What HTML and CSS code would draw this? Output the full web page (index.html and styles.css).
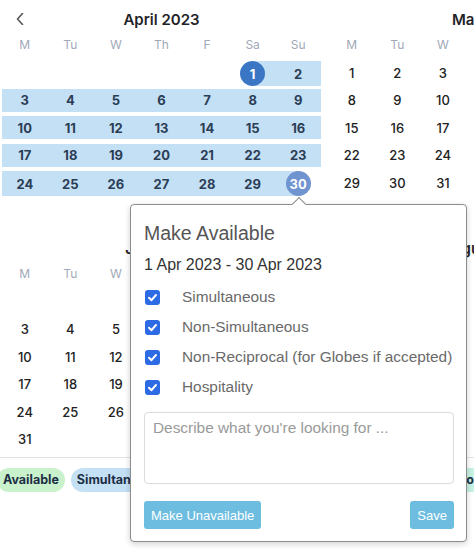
FILE: index.html
```html
<!DOCTYPE html>
<html>
<head>
<meta charset="utf-8">
<link rel="stylesheet" href="styles.css">
</head>
<body>
<div class="page">
  <div class="months">
    <section class="month">
      <div class="month-head">
        <svg class="prev" viewBox="0 0 12 12"><path d="M8.5 0.5 L3.5 6 L8.5 11.5" fill="none" stroke="#555" stroke-width="1.6" stroke-linecap="round" stroke-linejoin="round"/></svg>
        April 2023
      </div>
      <div class="weekdays"><span>M</span><span>Tu</span><span>W</span><span>Th</span><span>F</span><span>Sa</span><span>Su</span></div>
      <div class="week"><span class="d"></span><span class="d"></span><span class="d"></span><span class="d"></span><span class="d"></span><span class="d in start"><span class="circle c1">1</span></span><span class="d in">2</span></div>
      <div class="week"><span class="d in">3</span><span class="d in">4</span><span class="d in">5</span><span class="d in">6</span><span class="d in">7</span><span class="d in">8</span><span class="d in">9</span></div>
      <div class="week"><span class="d in">10</span><span class="d in">11</span><span class="d in">12</span><span class="d in">13</span><span class="d in">14</span><span class="d in">15</span><span class="d in">16</span></div>
      <div class="week"><span class="d in">17</span><span class="d in">18</span><span class="d in">19</span><span class="d in">20</span><span class="d in">21</span><span class="d in">22</span><span class="d in">23</span></div>
      <div class="week"><span class="d in">24</span><span class="d in">25</span><span class="d in">26</span><span class="d in">27</span><span class="d in">28</span><span class="d in">29</span><span class="d in end"><span class="circle c30">30</span></span></div>
    </section>
    <section class="month">
      <div class="month-head">May 2023</div>
      <div class="weekdays"><span>M</span><span>Tu</span><span>W</span><span>Th</span><span>F</span><span>Sa</span><span>Su</span></div>
      <div class="week"><span class="d">1</span><span class="d">2</span><span class="d">3</span><span class="d">4</span><span class="d">5</span><span class="d">6</span><span class="d">7</span></div>
      <div class="week"><span class="d">8</span><span class="d">9</span><span class="d">10</span><span class="d">11</span><span class="d">12</span><span class="d">13</span><span class="d">14</span></div>
      <div class="week"><span class="d">15</span><span class="d">16</span><span class="d">17</span><span class="d">18</span><span class="d">19</span><span class="d">20</span><span class="d">21</span></div>
      <div class="week"><span class="d">22</span><span class="d">23</span><span class="d">24</span><span class="d">25</span><span class="d">26</span><span class="d">27</span><span class="d">28</span></div>
      <div class="week"><span class="d">29</span><span class="d">30</span><span class="d">31</span><span class="d"></span><span class="d"></span><span class="d"></span><span class="d"></span></div>
    </section>
    <section class="month">
      <div class="month-head">July 2023</div>
      <div class="weekdays"><span>M</span><span>Tu</span><span>W</span><span>Th</span><span>F</span><span>Sa</span><span>Su</span></div>
      <div class="week"><span class="d"></span><span class="d"></span><span class="d"></span><span class="d"></span><span class="d"></span><span class="d">1</span><span class="d">2</span></div>
      <div class="week"><span class="d">3</span><span class="d">4</span><span class="d">5</span><span class="d">6</span><span class="d">7</span><span class="d">8</span><span class="d">9</span></div>
      <div class="week"><span class="d">10</span><span class="d">11</span><span class="d">12</span><span class="d">13</span><span class="d">14</span><span class="d">15</span><span class="d">16</span></div>
      <div class="week"><span class="d">17</span><span class="d">18</span><span class="d">19</span><span class="d">20</span><span class="d">21</span><span class="d">22</span><span class="d">23</span></div>
      <div class="week"><span class="d">24</span><span class="d">25</span><span class="d">26</span><span class="d">27</span><span class="d">28</span><span class="d">29</span><span class="d">30</span></div>
      <div class="week"><span class="d">31</span><span class="d"></span><span class="d"></span><span class="d"></span><span class="d"></span><span class="d"></span><span class="d"></span></div>
    </section>
    <section class="month">
      <div class="month-head">August 2023</div>
      <div class="weekdays"><span>M</span><span>Tu</span><span>W</span><span>Th</span><span>F</span><span>Sa</span><span>Su</span></div>
      <div class="week"><span class="d"></span><span class="d">1</span><span class="d">2</span><span class="d">3</span><span class="d">4</span><span class="d">5</span><span class="d">6</span></div>
      <div class="week"><span class="d">7</span><span class="d">8</span><span class="d">9</span><span class="d">10</span><span class="d">11</span><span class="d">12</span><span class="d">13</span></div>
      <div class="week"><span class="d">14</span><span class="d">15</span><span class="d">16</span><span class="d">17</span><span class="d">18</span><span class="d">19</span><span class="d">20</span></div>
      <div class="week"><span class="d">21</span><span class="d">22</span><span class="d">23</span><span class="d">24</span><span class="d">25</span><span class="d">26</span><span class="d">27</span></div>
      <div class="week"><span class="d">28</span><span class="d">29</span><span class="d">30</span><span class="d">31</span><span class="d"></span><span class="d"></span><span class="d"></span></div>
    </section>
  </div>
  <div class="rule"></div>
  <div class="legend">
    <span class="pill green">Available</span>
    <span class="pill blue">Simultaneous</span>
    <span class="pill purple">Non-Simultaneous</span>
    <span class="pill amber">Non-Reciprocal</span>
    <span class="pill teal">Hospitality</span>
  </div>

  <div class="popover">
    <span class="arrow"></span>
    <div class="pop-title">Make Available</div>
    <div class="pop-date">1 Apr 2023 - 30 Apr 2023</div>
    <div class="opts">
      <label class="opt"><span class="cb"><svg viewBox="0 0 15 15" width="15" height="15"><path d="M4 7.8 L6.5 10.2 L11 5" fill="none" stroke="#fff" stroke-width="2" stroke-linecap="round" stroke-linejoin="round"/></svg></span>Simultaneous</label>
      <label class="opt"><span class="cb"><svg viewBox="0 0 15 15" width="15" height="15"><path d="M4 7.8 L6.5 10.2 L11 5" fill="none" stroke="#fff" stroke-width="2" stroke-linecap="round" stroke-linejoin="round"/></svg></span>Non-Simultaneous</label>
      <label class="opt"><span class="cb"><svg viewBox="0 0 15 15" width="15" height="15"><path d="M4 7.8 L6.5 10.2 L11 5" fill="none" stroke="#fff" stroke-width="2" stroke-linecap="round" stroke-linejoin="round"/></svg></span>Non-Reciprocal (for Globes if accepted)</label>
      <label class="opt"><span class="cb"><svg viewBox="0 0 15 15" width="15" height="15"><path d="M4 7.8 L6.5 10.2 L11 5" fill="none" stroke="#fff" stroke-width="2" stroke-linecap="round" stroke-linejoin="round"/></svg></span>Hospitality</label>
    </div>
    <textarea class="desc" placeholder="Describe what you're looking for ..."></textarea>
    <div class="actions">
      <button class="btn">Make Unavailable</button>
      <button class="btn">Save</button>
    </div>
  </div>
</div>
</body>
</html>
```
FILE: styles.css
```css
* { box-sizing: border-box; }
body {
  margin: 0;
  font-family: Inter, "Liberation Sans", sans-serif;
  background: #fff;
  overflow: hidden;
}
.page {
  position: relative;
  width: 474px;
  height: 549px;
  overflow: hidden;
}
.months {
  display: grid;
  grid-template-columns: 319px 319px;
  column-gap: 8px;
  row-gap: 7px;
  padding-left: 2px;
  width: 700px;
}
.month { height: 222px; }
.month-head {
  position: relative;
  height: 38px;
  display: flex;
  align-items: center;
  justify-content: center;
  font-size: 15px;
  font-weight: 600;
  color: #1f2328;
  white-space: nowrap;
}
.prev {
  position: absolute;
  left: 12px;
  top: 13px;
  width: 12px;
  height: 12px;
}
.weekdays {
  display: grid;
  grid-template-columns: repeat(7, 1fr);
  height: 14px;
  line-height: 14px;
  font-size: 12px;
  color: #a1a9b8;
  text-align: center;
  margin-bottom: 9px;
}
.week {
  display: grid;
  grid-template-columns: repeat(7, 1fr);
  height: 23px;
  margin-bottom: 4.5px;
}
.d {
  display: flex;
  align-items: center;
  justify-content: center;
  font-size: 13px;
  font-weight: 500;
  color: #222;
}
.in {
  background: #c4e0f5;
  font-weight: 700;
  color: #2b3d55;
}
.in.start { background: linear-gradient(to right, transparent 50%, #c4e0f5 50%); }
.in.end { background: linear-gradient(to right, #c4e0f5 50%, transparent 50%); }
.circle {
  width: 25px;
  height: 25px;
  border-radius: 50%;
  color: #fff;
  display: flex;
  align-items: center;
  justify-content: center;
}
.c1 { background: #3a76c4; }
.c30 { background: #6f94cf; }

.rule {
  height: 1px;
  background: #e2e2e2;
  margin-top: 6px;
}
.legend {
  display: flex;
  gap: 6px;
  margin-top: 10px;
  margin-left: -3px;
  white-space: nowrap;
}
.pill {
  height: 24px;
  line-height: 24px;
  padding: 0 6px;
  border-radius: 12px;
  font-size: 12.5px;
  font-weight: 700;
  color: #1d2f45;
}
.green { background: #c9f2cc; }
.blue { background: #c4e0f5; }
.purple { background: #e3d6f5; }
.amber { background: #f7e3bd; }
.teal { background: #c6f1e3; margin-left: 32px; }

.popover {
  position: absolute;
  left: 130px;
  top: 204px;
  width: 337px;
  height: 338px;
  background: #fff;
  border: 1px solid #8c8c8c;
  border-radius: 4px;
  box-shadow: 0 2px 6px rgba(0, 0, 0, 0.18);
  padding: 14px 12px 12px 13px;
  font-family: "Liberation Sans", Arial, sans-serif;
}
.arrow {
  position: absolute;
  left: 163px;
  top: -6px;
  width: 10px;
  height: 10px;
  background: #fff;
  border-left: 1px solid #8c8c8c;
  border-top: 1px solid #8c8c8c;
  transform: rotate(45deg);
}
.pop-title {
  font-size: 19.5px;
  line-height: 28px;
  color: #555;
}
.pop-date {
  margin-top: 7px;
  font-size: 16px;
  line-height: 22px;
  color: #333;
}
.opts { margin-top: 6px; }
.opt {
  display: flex;
  align-items: center;
  height: 30px;
  font-size: 15.4px;
  color: #6a6a6a;
  white-space: nowrap;
}
.cb {
  width: 15px;
  height: 15px;
  border-radius: 3px;
  background: #2c6be3;
  margin-left: 1px;
  margin-right: 22px;
  display: flex;
  flex-shrink: 0;
}
.desc {
  display: block;
  margin-top: 10px;
  width: 310px;
  height: 72px;
  border: 1px solid #dcdcdc;
  border-radius: 4px;
  padding: 5px 8px;
  font-family: inherit;
  font-size: 15.4px;
  line-height: 20px;
  resize: none;
  outline: none;
}
.desc::placeholder { color: #9a9a9a; }
.actions {
  margin-top: 17px;
  width: 310px;
  display: flex;
  justify-content: space-between;
}
.btn {
  height: 28px;
  padding: 0 7px;
  border: none;
  border-radius: 3px;
  background: #6dbde0;
  color: #fff;
  font-family: inherit;
  font-size: 13px;
}
```
